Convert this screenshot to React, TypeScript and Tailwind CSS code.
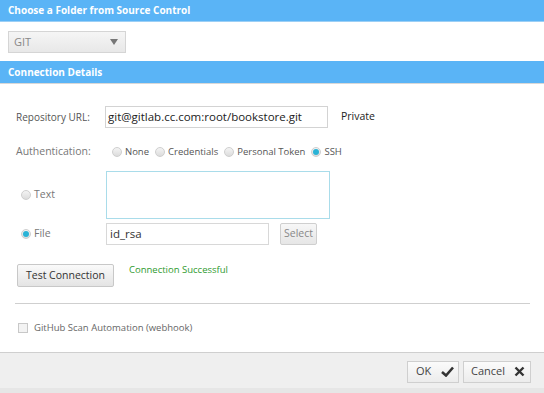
import React from "react";

const font = { fontFamily: '"Open Sans", "Noto Sans", "Liberation Sans", sans-serif' };

function Radio({ checked }: { checked?: boolean }) {
  return (
    <span className="inline-flex items-center justify-center w-[10px] h-[10px] rounded-full border border-[#cfcfcf] bg-gradient-to-b from-[#f4f4f4] to-[#dcdcdc] shrink-0">
      {checked && <span className="block w-[6px] h-[6px] rounded-full bg-[#2ab3d6]" />}
    </span>
  );
}

export default function App() {
  return (
    <div className="w-[544px] h-[393px] bg-white flex flex-col text-[11px] text-[#333] overflow-hidden" style={font}>
      <div className="h-[22px] bg-[#5ab4f6] text-white font-bold text-[10px] px-[8px] flex items-center border-b border-[#9ccff5]">
        Choose a Folder from Source Control
      </div>
      <div className="px-[8px] pt-[9px] pb-[8px]">
        <div className="w-[118px] h-[22px] border border-[#d5d5d5] bg-gradient-to-b from-[#f5f5f5] to-[#e8e8e8] flex items-center justify-between pl-[5px] pr-[7px]">
          <span className="text-[#888] text-[11px]">GIT</span>
          <svg width="8" height="6" viewBox="0 0 8 6"><path d="M0 0h8L4 6z" fill="#777" /></svg>
        </div>
      </div>
      <div className="h-[23px] bg-[#5ab4f6] text-white font-bold text-[10px] px-[8px] flex items-center border-b border-[#d8d8d8]">
        Connection Details
      </div>
      <div className="flex-1 flex flex-col pl-[15px] pr-[14px]">
        <div className="flex items-center mt-[22px] h-[22px]">
          <span className="w-[90px] pl-[1px] text-[#555] text-[10px]">Repository URL:</span>
          <div className="w-[223px] h-[22px] border border-[#d3d3d3] flex items-center px-[2px] text-[#222] text-[11.5px]">
            git@gitlab.cc.com:root/bookstore.git
          </div>
          <span className="ml-[13px] text-[#222] text-[10.5px]">Private</span>
        </div>
        <div className="flex items-center mt-[13px] h-[22px]">
          <span className="w-[97px] pl-[1px] text-[#777] text-[10.5px]">Authentication:</span>
          <div className="flex items-center gap-[3px] text-[#555] text-[9.5px]">
            <Radio /><span className="mr-[3px]">None</span>
            <Radio /><span className="mr-[3px]">Credentials</span>
            <Radio /><span className="mr-[3px]">Personal Token</span>
            <Radio checked /><span>SSH</span>
          </div>
        </div>
        <div className="flex items-center mt-[8px]">
          <div className="w-[91px] pl-[6px] flex items-center gap-[3px] text-[#777] text-[10.5px]">
            <Radio /><span>Text</span>
          </div>
          <div className="w-[224px] h-[48px] border border-[#a9dcea]" />
        </div>
        <div className="flex items-center mt-[4px] h-[22px]">
          <div className="w-[91px] pl-[6px] flex items-center gap-[3px] text-[#777] text-[10.5px]">
            <Radio checked /><span>File</span>
          </div>
          <div className="w-[163px] h-[22px] border border-[#d8d8d8] flex items-center px-[3px] text-[#333] text-[11.5px]">
            id_rsa
          </div>
          <div className="ml-[11px] w-[37px] h-[22px] border border-[#cfcfcf] rounded-[2px] bg-gradient-to-b from-[#f7f7f7] to-[#e6e6e6] flex items-center justify-center text-[#888] text-[10.5px]">
            Select
          </div>
        </div>
        <div className="flex items-start mt-[19px]">
          <div className="ml-[2px] w-[97px] h-[23px] border border-[#c8c8c8] rounded-[2px] bg-gradient-to-b from-[#fafafa] to-[#e4e4e4] flex items-center justify-center text-[#333] text-[10.5px]">
            Test Connection
          </div>
          <span className="ml-[15px] mt-[-1px] text-[#2f9a2f] text-[9.5px]">Connection Successful</span>
        </div>
        <div className="mt-[16px] border-t border-[#cfcfcf]" />
        <div className="flex items-center mt-[17px] ml-[3px]">
          <span className="w-[10px] h-[10px] border border-[#c8c8c8] bg-[#f3f3f3]" />
          <span className="ml-[6px] text-[#666] text-[9.5px]">GitHub Scan Automation (webhook)</span>
        </div>
      </div>
      <div className="h-[41px] border-t border-[#cfcfcf] bg-[#efefef] flex flex-col">
        <div className="flex-1 flex items-center justify-end pr-[13px] gap-[4px] pt-[2px]">
          <div className="w-[52px] h-[22px] border border-[#cfcfcf] bg-gradient-to-b from-[#fbfbfb] to-[#ececec] flex items-center justify-between pl-[8px] pr-[4px] text-[#444] text-[11px]">
            <span>OK</span>
            <svg width="13" height="11" viewBox="0 0 13 11"><path d="M1 6l4 3.5L12 1.5" fill="none" stroke="#333" strokeWidth="2.6" /></svg>
          </div>
          <div className="w-[68px] h-[22px] border border-[#cfcfcf] bg-gradient-to-b from-[#fbfbfb] to-[#ececec] flex items-center justify-between pl-[7px] pr-[5px] text-[#444] text-[11px]">
            <span>Cancel</span>
            <svg width="11" height="11" viewBox="0 0 11 11"><path d="M1.5 1.5l8 8M9.5 1.5l-8 8" fill="none" stroke="#333" strokeWidth="2.4" /></svg>
          </div>
        </div>
        <div className="h-[5px] bg-[#e6e6e6]" />
      </div>
    </div>
  );
}
